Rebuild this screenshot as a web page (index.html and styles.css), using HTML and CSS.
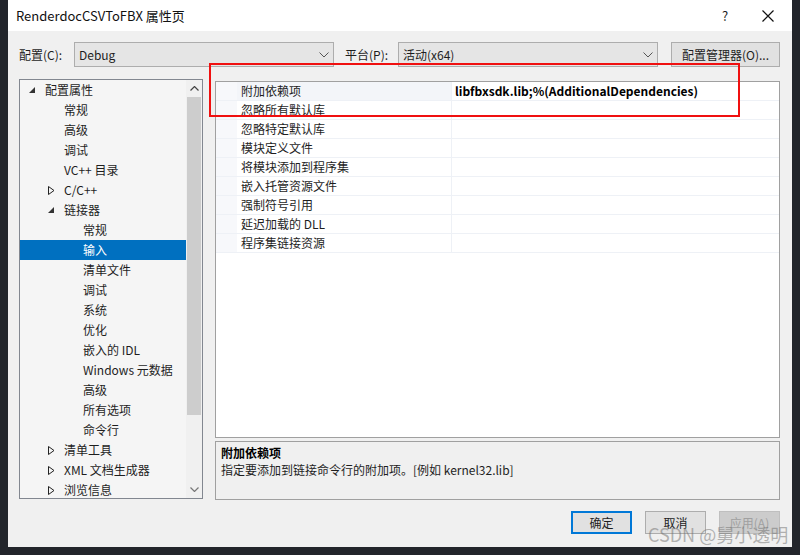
FILE: index.html
```html
<!DOCTYPE html>
<html lang="zh-CN">
<head>
  <meta charset="UTF-8" />
  <title>RenderdocCSVToFBX 属性页</title>
  <link rel="stylesheet" href="styles.css">
</head>
<body>
  <div class="dialog">
    <!-- Title bar -->
    <div class="titlebar">
      <span class="title">RenderdocCSVToFBX 属性页</span>
      <span class="help">?</span>
      <span class="close">
        <svg width="12" height="12" viewBox="0 0 12 12"><path d="M0.5 0.5 L11.5 11.5 M11.5 0.5 L0.5 11.5" stroke="#111" stroke-width="1.2" fill="none"/></svg>
      </span>
    </div>

    <!-- Configuration / platform row -->
    <div class="config-row">
      <label class="lbl lbl-config">配置(C):</label>
      <div class="select sel-config">
        <span>Debug</span>
        <svg width="10" height="6" viewBox="0 0 10 6"><path d="M0.5 0.5 L5 5 L9.5 0.5" stroke="#555" fill="none"/></svg>
      </div>
      <label class="lbl lbl-platform">平台(P):</label>
      <div class="select sel-platform">
        <span>活动(x64)</span>
        <svg width="10" height="6" viewBox="0 0 10 6"><path d="M0.5 0.5 L5 5 L9.5 0.5" stroke="#555" fill="none"/></svg>
      </div>
      <button class="btn btn-manager">配置管理器(O)...</button>
    </div>

    <div class="main">
      <!-- Settings tree -->
      <div class="tree">
        <ul class="tree-list">
          <li class="lv0"><span class="tw"><svg width="6" height="6"><polygon points="6,0 6,6 0,6" fill="#333"/></svg></span>配置属性</li>
          <li class="lv1"><span class="tw"></span>常规</li>
          <li class="lv1"><span class="tw"></span>高级</li>
          <li class="lv1"><span class="tw"></span>调试</li>
          <li class="lv1"><span class="tw"></span>VC++ 目录</li>
          <li class="lv1"><span class="tw"><svg width="7" height="9"><polygon points="0.5,0.5 6,4.5 0.5,8.5" fill="none" stroke="#222"/></svg></span>C/C++</li>
          <li class="lv1"><span class="tw"><svg width="6" height="6"><polygon points="6,0 6,6 0,6" fill="#333"/></svg></span>链接器</li>
          <li class="lv2"><span class="tw"></span>常规</li>
          <li class="lv2 selected"><span class="tw"></span>输入</li>
          <li class="lv2"><span class="tw"></span>清单文件</li>
          <li class="lv2"><span class="tw"></span>调试</li>
          <li class="lv2"><span class="tw"></span>系统</li>
          <li class="lv2"><span class="tw"></span>优化</li>
          <li class="lv2"><span class="tw"></span>嵌入的 IDL</li>
          <li class="lv2"><span class="tw"></span>Windows 元数据</li>
          <li class="lv2"><span class="tw"></span>高级</li>
          <li class="lv2"><span class="tw"></span>所有选项</li>
          <li class="lv2"><span class="tw"></span>命令行</li>
          <li class="lv1"><span class="tw"><svg width="7" height="9"><polygon points="0.5,0.5 6,4.5 0.5,8.5" fill="none" stroke="#222"/></svg></span>清单工具</li>
          <li class="lv1"><span class="tw"><svg width="7" height="9"><polygon points="0.5,0.5 6,4.5 0.5,8.5" fill="none" stroke="#222"/></svg></span>XML 文档生成器</li>
          <li class="lv1"><span class="tw"><svg width="7" height="9"><polygon points="0.5,0.5 6,4.5 0.5,8.5" fill="none" stroke="#222"/></svg></span>浏览信息</li>
        </ul>
        <div class="scrollbar">
          <div class="arrow">
            <svg width="9" height="5" viewBox="0 0 9 5"><path d="M0.5 4.5 L4.5 0.5 L8.5 4.5" stroke="#444" stroke-width="1.2" fill="none"/></svg>
          </div>
          <div class="track"><div class="thumb"></div></div>
          <div class="arrow">
            <svg width="9" height="5" viewBox="0 0 9 5"><path d="M0.5 0.5 L4.5 4.5 L8.5 0.5" stroke="#777" stroke-width="1.2" fill="none"/></svg>
          </div>
        </div>
      </div>

      <div class="right">
        <!-- Property grid -->
        <div class="grid">
          <div class="row current"><div class="gutter"></div><div class="name">附加依赖项</div><div class="value">libfbxsdk.lib;%(AdditionalDependencies)</div></div>
          <div class="row"><div class="gutter"></div><div class="name">忽略所有默认库</div><div class="value"></div></div>
          <div class="row"><div class="gutter"></div><div class="name">忽略特定默认库</div><div class="value"></div></div>
          <div class="row"><div class="gutter"></div><div class="name">模块定义文件</div><div class="value"></div></div>
          <div class="row"><div class="gutter"></div><div class="name">将模块添加到程序集</div><div class="value"></div></div>
          <div class="row"><div class="gutter"></div><div class="name">嵌入托管资源文件</div><div class="value"></div></div>
          <div class="row"><div class="gutter"></div><div class="name">强制符号引用</div><div class="value"></div></div>
          <div class="row"><div class="gutter"></div><div class="name">延迟加载的 DLL</div><div class="value"></div></div>
          <div class="row"><div class="gutter"></div><div class="name">程序集链接资源</div><div class="value"></div></div>
        </div>

        <!-- Description of the selected property -->
        <div class="desc">
          <div class="desc-title">附加依赖项</div>
          <div class="desc-text">指定要添加到链接命令行的附加项。[例如 kernel32.lib]</div>
        </div>
      </div>
    </div>

    <div class="buttons">
      <button class="btn btn-ok">确定</button>
      <button class="btn">取消</button>
      <button class="btn btn-disabled">应用(A)</button>
    </div>

    <!-- highlight box drawn over the grid -->
    <div class="mark"></div>
  </div>

  <div class="watermark">CSDN @舅小透明</div>
</body>
</html>
```

FILE: styles.css
```css
* {
  box-sizing: border-box;
}

body {
  margin: 0;
  width: 800px;
  height: 555px;
  overflow: hidden;
  background-color: #22252b;
  font-family: "Noto Sans CJK SC", "Noto Sans", sans-serif;
  font-size: 12px;
  color: #1e1e1e;
  position: relative;
}

.dialog {
  position: relative;
  margin-left: 8px;
  width: 784px;
  height: 547px;
  background-color: #f0f0f0;
}

.titlebar {
  height: 31px;
  background: #fff;
  display: flex;
  align-items: center;
  padding-left: 8px;
}

.title {
  font-size: 13px;
  color: #111;
  flex: 1;
  line-height: 16px;
  padding-top: 1px;
}

.help {
  width: 20px;
  text-align: center;
  font-size: 13px;
  margin-right: 27px;
}

.close {
  width: 14px;
  display: flex;
  margin-right: 16px;
}

.config-row {
  display: flex;
  align-items: center;
  height: 25px;
  margin-top: 11px;
  padding-left: 11px;
}

.lbl {
  line-height: 16px;
}

.lbl-config {
  width: 55px;
}

.lbl-platform {
  width: 53px;
  margin-left: 11px;
}

.select {
  height: 25px;
  background: #e5e5e5;
  border: 1px solid #adadad;
  display: flex;
  align-items: center;
  justify-content: space-between;
  padding: 0 4px 0 4px;
  line-height: 16px;
}

.sel-config {
  width: 260px;
}

.sel-platform {
  width: 260px;
}

.btn {
  font-family: inherit;
  font-size: 12px;
  color: #1e1e1e;
  background: #e1e1e1;
  border: 1px solid #adadad;
  padding: 0;
  line-height: 16px;
}

.btn-manager {
  width: 109px;
  height: 25px;
  margin-left: 13px;
}

.main {
  display: flex;
  gap: 12px;
  margin-top: 12px;
  padding-left: 11px;
}

.tree {
  width: 184px;
  height: 420px;
  border: 1px solid #828790;
  background: #f5f5f5;
  display: flex;
}

.tree-list {
  list-style: none;
  margin: 0;
  padding: 0;
  flex: 1;
}

.tree-list li {
  height: 20px;
  line-height: 20px;
  display: flex;
  align-items: center;
  white-space: nowrap;
}

.tw {
  width: 19px;
  display: flex;
  align-items: center;
  padding-left: 3px;
}

.lv0 { padding-left: 6px; }
.lv1 { padding-left: 25px; }
.lv2 { padding-left: 44px; }

.tree-list li.selected {
  background: #0070c0;
  color: #fff;
}

.scrollbar {
  width: 16px;
  display: flex;
  flex-direction: column;
  background: #f0f0f0;
}

.arrow {
  height: 17px;
  display: flex;
  align-items: center;
  justify-content: center;
}

.track {
  flex: 1;
}

.thumb {
  height: 318px;
  margin: 0 1px;
  background: #cdcdcd;
}

.right {
  width: 565px;
  margin-top: 2px;
  display: flex;
  flex-direction: column;
  gap: 3px;
}

.grid {
  height: 357px;
  border: 1px solid #a0a0a0;
  background: #fff;
}

.row {
  display: flex;
  height: 19px;
  line-height: 18px;
  border-bottom: 1px solid #eef1f6;
}

.gutter {
  width: 21px;
  background: #f7f8fb;
}

.name {
  width: 215px;
  padding-left: 4px;
  border-right: 1px solid #eef1f6;
}

.row.current .name {
  background: #f3f5f9;
}

.value {
  flex: 1;
  padding-left: 3px;
  font-weight: bold;
  color: #000;
}

.desc {
  height: 59px;
  border: 1px solid #a0a0a0;
  background: #f0f0f0;
  padding: 2px 5px;
  line-height: 17px;
}

.desc-title {
  font-weight: bold;
  color: #000;
}

.buttons {
  display: flex;
  justify-content: flex-end;
  gap: 13px;
  margin-top: 11px;
  padding-right: 12px;
}

.buttons .btn {
  width: 61px;
  height: 23px;
}

.btn-ok {
  border: 2px solid #0078d7 !important;
}

.btn-disabled {
  color: #a0a0a0 !important;
  background: #cccccc !important;
  border-color: #bfbfbf !important;
}

.mark {
  position: absolute;
  left: 201px;
  top: 63px;
  width: 531px;
  height: 54px;
  border: 2px solid #f01010;
}

.watermark {
  position: absolute;
  left: 648px;
  top: 523px;
  font-size: 18px;
  line-height: 22px;
  color: rgba(110, 110, 110, 0.5);
  white-space: nowrap;
}
```
